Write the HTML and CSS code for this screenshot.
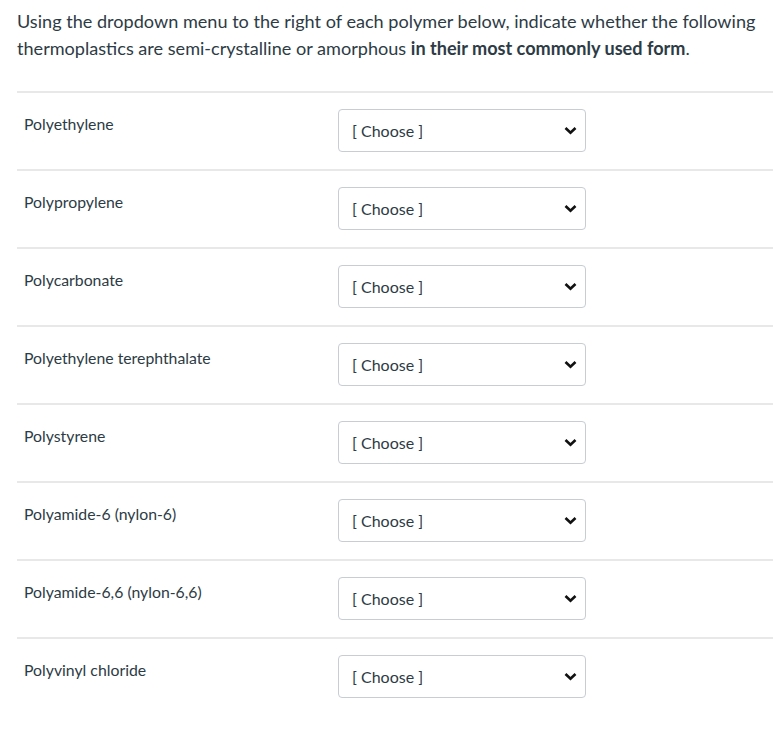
FILE: index.html
```html
<!DOCTYPE html>
<html>
<head>
<meta charset="utf-8">
<link rel="stylesheet" href="styles.css">
</head>
<body>
<div class="page">
  <p class="intro">Using the dropdown menu to the right of each polymer below, indicate whether the following thermoplastics are semi-crystalline or amorphous <strong>in their most commonly used form</strong>.</p>
  <div class="rows">
    <div class="row"><div class="label">Polyethylene</div><div class="select"><span>[ Choose ]</span><svg class="chev" width="13" height="9" viewBox="0 0 13 9"><path d="M1.5 2 L6.5 6.8 L11.5 2" fill="none" stroke="#111" stroke-width="2.6"/></svg></div></div>
    <div class="row"><div class="label">Polypropylene</div><div class="select"><span>[ Choose ]</span><svg class="chev" width="13" height="9" viewBox="0 0 13 9"><path d="M1.5 2 L6.5 6.8 L11.5 2" fill="none" stroke="#111" stroke-width="2.6"/></svg></div></div>
    <div class="row"><div class="label">Polycarbonate</div><div class="select"><span>[ Choose ]</span><svg class="chev" width="13" height="9" viewBox="0 0 13 9"><path d="M1.5 2 L6.5 6.8 L11.5 2" fill="none" stroke="#111" stroke-width="2.6"/></svg></div></div>
    <div class="row"><div class="label">Polyethylene terephthalate</div><div class="select"><span>[ Choose ]</span><svg class="chev" width="13" height="9" viewBox="0 0 13 9"><path d="M1.5 2 L6.5 6.8 L11.5 2" fill="none" stroke="#111" stroke-width="2.6"/></svg></div></div>
    <div class="row"><div class="label">Polystyrene</div><div class="select"><span>[ Choose ]</span><svg class="chev" width="13" height="9" viewBox="0 0 13 9"><path d="M1.5 2 L6.5 6.8 L11.5 2" fill="none" stroke="#111" stroke-width="2.6"/></svg></div></div>
    <div class="row"><div class="label">Polyamide-6 (nylon-6)</div><div class="select"><span>[ Choose ]</span><svg class="chev" width="13" height="9" viewBox="0 0 13 9"><path d="M1.5 2 L6.5 6.8 L11.5 2" fill="none" stroke="#111" stroke-width="2.6"/></svg></div></div>
    <div class="row"><div class="label">Polyamide-6,6 (nylon-6,6)</div><div class="select"><span>[ Choose ]</span><svg class="chev" width="13" height="9" viewBox="0 0 13 9"><path d="M1.5 2 L6.5 6.8 L11.5 2" fill="none" stroke="#111" stroke-width="2.6"/></svg></div></div>
    <div class="row"><div class="label">Polyvinyl chloride</div><div class="select"><span>[ Choose ]</span><svg class="chev" width="13" height="9" viewBox="0 0 13 9"><path d="M1.5 2 L6.5 6.8 L11.5 2" fill="none" stroke="#111" stroke-width="2.6"/></svg></div></div>
  </div>
</div>
</body>
</html>
```
FILE: styles.css
```css
html, body {
  margin: 0;
  padding: 0;
  background: #fff;
}
body {
  font-family: Lato, "Noto Sans", sans-serif;
  color: #2d3b45;
}
.page {
  padding: 8px 0 0 17px;
}
.intro {
  margin: 0 0 29px 0;
  font-size: 18.1px;
  line-height: 27px;
  padding-right: 4px;
}
.intro strong {
  font-weight: 700;
}
.row {
  border-top: 2px solid #e8e8e8;
  height: 76px;
  display: flex;
  align-items: flex-start;
}
.label {
  width: 314px;
  padding-left: 7px;
  padding-top: 22px;
  font-size: 15.8px;
  line-height: 18px;
}
.select {
  margin-top: 16px;
  box-sizing: border-box;
  width: 248px;
  height: 43px;
  border: 1px solid #c7cdd1;
  border-radius: 4px;
  display: flex;
  align-items: center;
  justify-content: space-between;
  padding: 0 8px 0 13px;
  font-size: 16px;
}
.chev {
  display: block;
}
```
